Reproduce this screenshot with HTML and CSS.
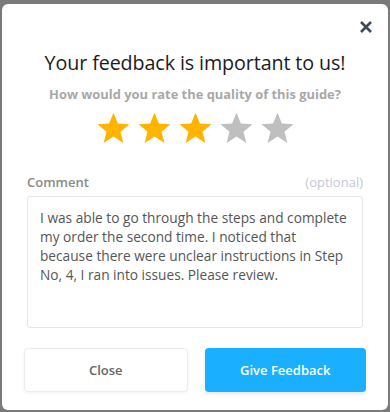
FILE: index.html
```html
<!DOCTYPE html>
<html lang="en">
<head>
<meta charset="utf-8">
<link rel="stylesheet" href="styles.css">
</head>
<body>
<div class="backdrop">
  <div class="modal">
    <button class="close-x" aria-label="Close">
      <svg width="14" height="14" viewBox="0 0 14 14"><path d="M2 2 L12 12 M12 2 L2 12" stroke="#3f4a59" stroke-width="2.6" stroke-linecap="butt"/></svg>
    </button>
    <h1 class="title">Your feedback is important to us!</h1>
    <p class="subtitle">How would you rate the quality of this guide?</p>
    <div class="stars">
      <svg class="star on" viewBox="0 0 24 24"><path d="M12 1.2 L15.2 9.1 L23.6 9.6 L17.1 15 L19.2 23.2 L12 18.6 L4.8 23.2 L6.9 15 L0.4 9.6 L8.8 9.1 Z"/></svg>
      <svg class="star on" viewBox="0 0 24 24"><path d="M12 1.2 L15.2 9.1 L23.6 9.6 L17.1 15 L19.2 23.2 L12 18.6 L4.8 23.2 L6.9 15 L0.4 9.6 L8.8 9.1 Z"/></svg>
      <svg class="star on" viewBox="0 0 24 24"><path d="M12 1.2 L15.2 9.1 L23.6 9.6 L17.1 15 L19.2 23.2 L12 18.6 L4.8 23.2 L6.9 15 L0.4 9.6 L8.8 9.1 Z"/></svg>
      <svg class="star" viewBox="0 0 24 24"><path d="M12 1.2 L15.2 9.1 L23.6 9.6 L17.1 15 L19.2 23.2 L12 18.6 L4.8 23.2 L6.9 15 L0.4 9.6 L8.8 9.1 Z"/></svg>
      <svg class="star" viewBox="0 0 24 24"><path d="M12 1.2 L15.2 9.1 L23.6 9.6 L17.1 15 L19.2 23.2 L12 18.6 L4.8 23.2 L6.9 15 L0.4 9.6 L8.8 9.1 Z"/></svg>
    </div>
    <div class="field">
      <div class="field-head">
        <span class="label">Comment</span>
        <span class="optional">(optional)</span>
      </div>
      <div class="textarea">I was able to go through the steps and complete my order the second time. I noticed that because there were unclear instructions in Step No, 4, I ran into issues. Please review.</div>
    </div>
    <div class="actions">
      <button class="btn btn-secondary">Close</button>
      <button class="btn btn-primary">Give Feedback</button>
    </div>
  </div>
</div>
</body>
</html>
```

FILE: styles.css
```css
html, body {
  margin: 0;
  padding: 0;
}
body {
  width: 390px;
  height: 412px;
  background: #7a7a7a;
  font-family: "Open Sans", "Noto Sans", sans-serif;
  overflow: hidden;
}
.backdrop {
  padding: 4px 2px 2px 2px;
  height: 406px;
}
.modal {
  position: relative;
  background: #fff;
  border-radius: 6px;
  height: 406px;
  box-sizing: border-box;
  padding: 0 22px 0 22px;
  display: flex;
  flex-direction: column;
}
.close-x {
  position: absolute;
  top: 16px;
  right: 15px;
  width: 14px;
  height: 14px;
  padding: 0;
  border: 0;
  background: transparent;
  display: flex;
}
.title {
  margin: 45px 0 0 0;
  font-size: 19.7px;
  font-weight: 500;
  color: #1b1b1b;
  text-align: center;
  line-height: 28px;
  letter-spacing: -0.1px;
}
.subtitle {
  margin: 8px 0 0 0;
  font-size: 12.9px;
  font-weight: 700;
  color: #a8a8a8;
  text-align: center;
  line-height: 18px;
}
.stars {
  margin-top: 8px;
  display: flex;
  justify-content: center;
  gap: 8px;
}
.star {
  width: 33px;
  height: 33px;
  fill: #bfbfbf;
}
.star.on {
  fill: #ffb400;
}
.field {
  margin-top: 29px;
  padding: 0 3px 0 3px;
}
.field-head {
  display: flex;
  justify-content: space-between;
  align-items: baseline;
  font-size: 13px;
  line-height: 18px;
}
.label {
  color: #8a8a8a;
  font-weight: 600;
}
.optional {
  color: #c5c6d9;
}
.textarea {
  margin-top: 5px;
  height: 132px;
  box-sizing: border-box;
  border: 1px solid #e6e6e6;
  border-radius: 3px;
  padding: 11px 12px;
  font-size: 13.7px;
  line-height: 19px;
  color: #555;
}
.actions {
  margin-top: 20px;
  display: flex;
  gap: 17px;
}
.btn {
  flex: 1 1 0;
  min-width: 0;
  height: 44px;
  border-radius: 4px;
  font-family: inherit;
  font-size: 13px;
  font-weight: 600;
  cursor: pointer;
}
.btn-secondary {
  background: #fff;
  color: #666;
  border: 1px solid #ececec;
  box-shadow: 0 1px 3px rgba(0,0,0,0.06);
}
.btn-primary {
  background: #1aafff;
  color: #fff;
  border: 0;
  box-shadow: 0 2px 4px rgba(0,0,0,0.1);
}
```
